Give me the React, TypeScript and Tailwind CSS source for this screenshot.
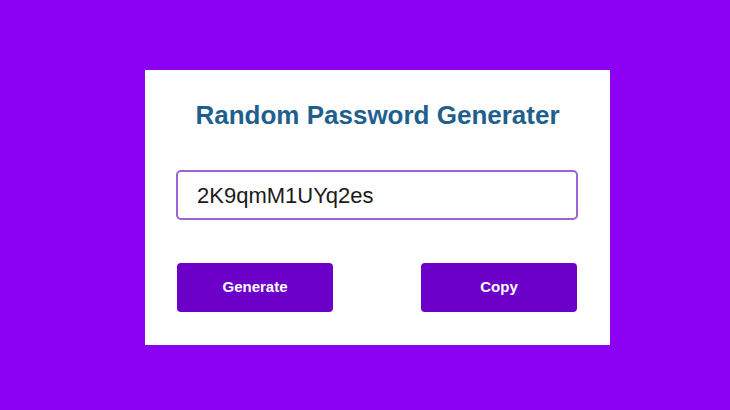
import React from "react";

export default function App() {
  return (
    <div
      className="w-[730px] h-[410px] bg-[#8b00f3] pt-[70px] pl-[145px]"
      style={{ fontFamily: '"Liberation Sans", Arial, sans-serif' }}
    >
      <div className="w-[465px] h-[275px] bg-white pt-[30px] px-[31px]">
        <h1 className="text-center text-[26px] leading-[30px] font-bold text-[#1f5f8e]">
          Random Password Generater
        </h1>
        <div className="mt-[40px] h-[50px] w-[402px] rounded-[5px] border-2 border-[#9c64cf] flex items-center pl-[19px]">
          <span className="text-[22px] text-[#1a1a1a]">2K9qmM1UYq2es</span>
        </div>
        <div className="mt-[43px] flex justify-between w-[402px]">
          <button className="ml-px w-[156px] h-[49px] rounded-[4px] bg-[#6c00c9] text-white text-[15px] font-bold">
            Generate
          </button>
          <button className="mr-px w-[156px] h-[49px] rounded-[4px] bg-[#6c00c9] text-white text-[15px] font-bold">
            Copy
          </button>
        </div>
      </div>
    </div>
  );
}
